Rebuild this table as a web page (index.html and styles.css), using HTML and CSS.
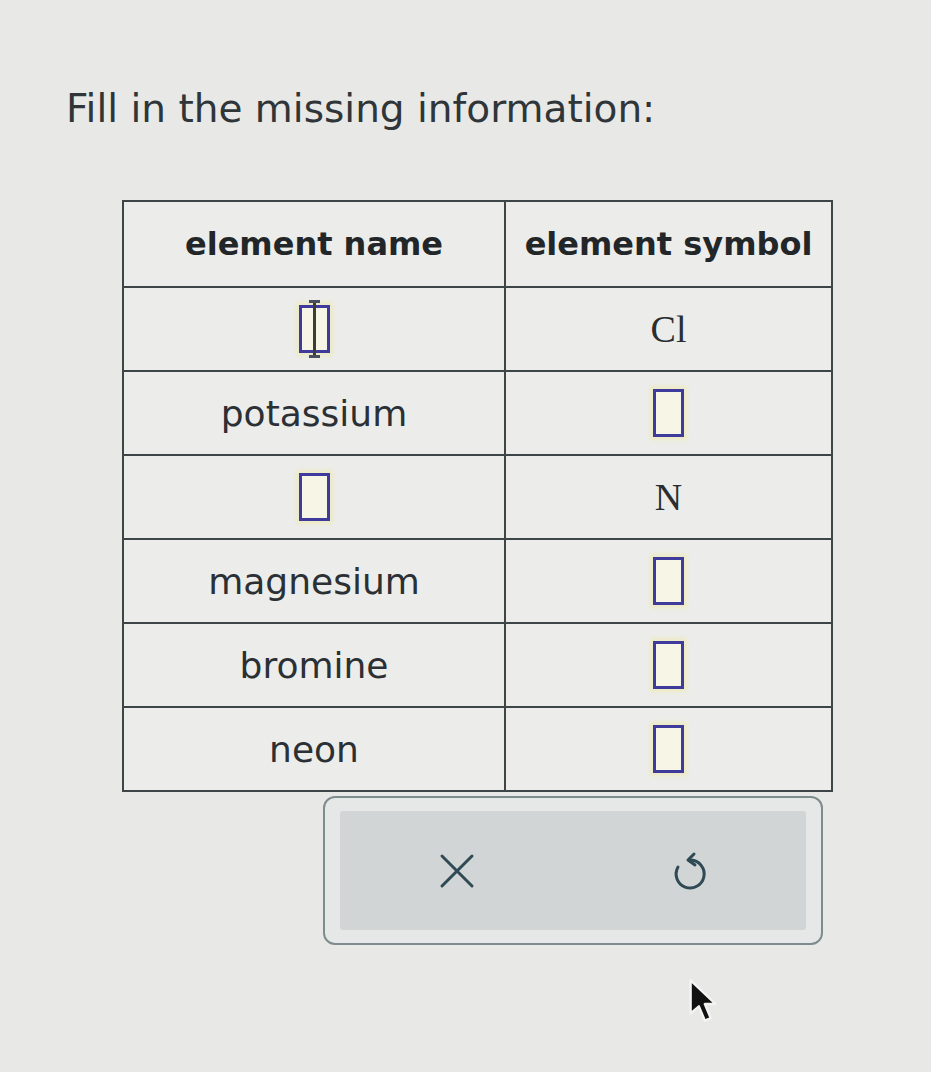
FILE: index.html
```html
<!DOCTYPE html>
<html lang="en">
<head>
<meta charset="utf-8">
<title>Fill in the missing information</title>
<link rel="stylesheet" href="styles.css">
</head>
<body>
<main class="page">
  <h1 class="prompt">Fill in the missing information:</h1>
  <table class="elements">
    <thead>
      <tr><th>element name</th><th>element symbol</th></tr>
    </thead>
    <tbody>
      <tr><td><span class="box active"><span class="ibeam"></span></span></td><td class="sym">Cl</td></tr>
      <tr><td>potassium</td><td><span class="box"></span></td></tr>
      <tr><td><span class="box"></span></td><td class="sym">N</td></tr>
      <tr><td>magnesium</td><td><span class="box"></span></td></tr>
      <tr><td>bromine</td><td><span class="box"></span></td></tr>
      <tr><td>neon</td><td><span class="box"></span></td></tr>
    </tbody>
  </table>
  <div class="actions">
    <div class="actions-inner">
      <button class="act" aria-label="Clear">
        <svg width="36" height="36" viewBox="0 0 36 36"><path d="M3 3 L33 33 M33 3 L3 33" stroke="#2f4a55" stroke-width="3" fill="none" stroke-linecap="round"/></svg>
      </button>
      <button class="act" aria-label="Undo">
        <svg width="44" height="44" viewBox="-22 -22 44 44"><path d="M-12 -4 A14 14 0 1 0 1 -11" stroke="#2f4a55" stroke-width="3" fill="none" stroke-linecap="round"/><path d="M4 -17 L-2 -11 L5 -6" stroke="#2f4a55" stroke-width="3" fill="none" stroke-linecap="round" stroke-linejoin="round"/></svg>
      </button>
    </div>
  </div>
  <svg class="pointer" width="36" height="52" viewBox="0 0 30 44"><path d="M2 2 L2 30 L9 24 L14 36 L19 34 L14 22 L23 22 Z" fill="#111" stroke="#f4f4f4" stroke-width="2" stroke-linejoin="round"/></svg>
</main>
</body>
</html>
```

FILE: styles.css
```css
html, body {
  margin: 0;
  padding: 0;
}
body {
  background: #e8e9e7;
  font-family: "DejaVu Sans", Verdana, sans-serif;
  color: #2b3034;
  width: 931px;
  height: 1072px;
  overflow: hidden;
}
.page {
  position: relative;
  padding-top: 86px;
  height: 986px;
}
.prompt {
  margin: 0 0 68px 66px;
  font-size: 39px;
  font-weight: normal;
  line-height: 46px;
  color: #2f3539;
}
.elements {
  margin-left: 122px;
  border-collapse: collapse;
  width: 711px;
  background: #ecedeb;
}
.elements th, .elements td {
  border: 2px solid #3d4547;
  text-align: center;
  vertical-align: middle;
  padding: 0;
}
.elements th:first-child, .elements td:first-child {
  width: 380px;
}
.elements th {
  height: 84px;
  font-size: 32px;
  font-weight: bold;
  color: #222628;
}
.elements td {
  height: 82px;
  font-size: 36px;
  color: #2b3034;
}
.elements td.sym {
  font-family: "Liberation Serif", "Times New Roman", serif;
  font-size: 38px;
  color: #2a2e30;
}
.box {
  position: relative;
  display: inline-block;
  vertical-align: middle;
  width: 25px;
  height: 42px;
  border: 3px solid #3f3b9c;
  background: #f7f6e6;
  box-shadow: 0 0 4px 3px rgba(238, 232, 170, 0.6);
}
.ibeam {
  position: absolute;
  left: 11px;
  top: -8px;
  width: 3px;
  height: 58px;
  background: #3a4030;
}
.ibeam::before, .ibeam::after {
  content: "";
  position: absolute;
  left: -4px;
  width: 11px;
  height: 3px;
  background: #4a4f60;
}
.ibeam::before { top: 0; }
.ibeam::after { bottom: 0; }
.actions {
  margin: 4px 0 0 323px;
  width: 500px;
  height: 149px;
  border: 2px solid #7f8c8e;
  border-radius: 12px;
  background: #e6e8e7;
  padding: 13px 15px;
  box-sizing: border-box;
}
.actions-inner {
  display: grid;
  grid-template-columns: 1fr 1fr;
  height: 100%;
  background: #d1d5d5;
  border-radius: 3px;
}
.act {
  border: 0;
  background: transparent;
  display: flex;
  align-items: center;
  justify-content: center;
  padding: 0;
}
.pointer {
  position: absolute;
  left: 688px;
  top: 978px;
}
```
